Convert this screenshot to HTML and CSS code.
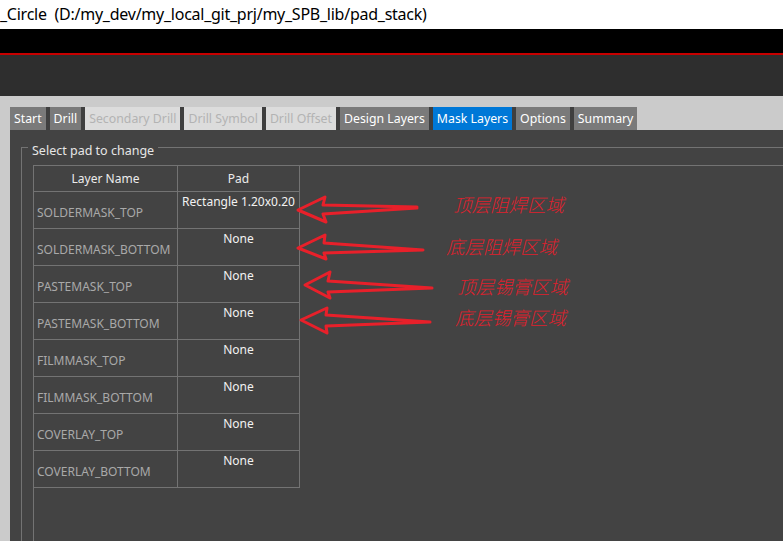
FILE: index.html
```html
<!DOCTYPE html>
<html>
<head>
<meta charset="utf-8">
<link rel="stylesheet" href="styles.css">
</head>
<body>
<div class="screen">
  <div class="titlebar">_Circle&nbsp; (D:/my_dev/my_local_git_prj/my_SPB_lib/pad_stack)</div>
  <div class="blackbar"></div>
  <div class="toolbar"></div>
  <div class="main">
    <div class="tabs">
      <div class="tab">Start</div>
      <div class="tab">Drill</div>
      <div class="tab disabled">Secondary Drill</div>
      <div class="tab disabled">Drill Symbol</div>
      <div class="tab disabled">Drill Offset</div>
      <div class="tab">Design Layers</div>
      <div class="tab active">Mask Layers</div>
      <div class="tab">Options</div>
      <div class="tab">Summary</div>
    </div>
    <div class="panel">
      <div class="group">
        <div class="group-title">Select pad to change</div>
        <div class="table-frame">
          <table class="grid">
            <thead>
              <tr><th class="c1">Layer Name</th><th class="c2">Pad</th></tr>
            </thead>
            <tbody>
              <tr><td class="name">SOLDERMASK_TOP</td><td class="pad">Rectangle 1.20x0.20</td></tr>
              <tr><td class="name">SOLDERMASK_BOTTOM</td><td class="pad">None</td></tr>
              <tr><td class="name">PASTEMASK_TOP</td><td class="pad">None</td></tr>
              <tr><td class="name">PASTEMASK_BOTTOM</td><td class="pad">None</td></tr>
              <tr><td class="name">FILMMASK_TOP</td><td class="pad">None</td></tr>
              <tr><td class="name">FILMMASK_BOTTOM</td><td class="pad">None</td></tr>
              <tr><td class="name">COVERLAY_TOP</td><td class="pad">None</td></tr>
              <tr><td class="name">COVERLAY_BOTTOM</td><td class="pad">None</td></tr>
            </tbody>
          </table>
        </div>
      </div>
    </div>
  </div>
  <svg class="annot" width="783" height="541" viewBox="0 0 783 541">
    <g class="arrow">
      <path d="M417,207 L323,205 L325,197 L298,210 L326,222 L323,214 L417,208"/>
      <path d="M423,250 L324,243 L325,235 L298,248 L326,259 L324,253 L423,250"/>
      <path d="M432,288 L328,281 L330,272 L305,285 L330,298 L328,292 L432,288"/>
      <path d="M430,322 L326,315 L327,308 L301,320 L327,333 L326,326 L430,322"/>
    </g>
    <g class="note">
      <text x="453" y="212">顶层阻焊区域</text>
      <text x="446" y="254">底层阻焊区域</text>
      <text x="457" y="294">顶层锡膏区域</text>
      <text x="455" y="325">底层锡膏区域</text>
    </g>
  </svg>
</div>
</body>
</html>
```
FILE: styles.css
```css
html, body {
  margin: 0;
  padding: 0;
  overflow: hidden;
  background: #434343;
}
.screen {
  position: relative;
  width: 783px;
  height: 541px;
  overflow: hidden;
  font-family: "Noto Sans", "Open Sans", sans-serif;
}
.titlebar {
  height: 29px;
  background: #ffffff;
  color: #000000;
  font-size: 16px;
  line-height: 29px;
  white-space: nowrap;
  letter-spacing: -0.25px;
}
.blackbar {
  height: 24px;
  background: #000000;
  border-bottom: 2px solid #c80000;
}
.toolbar {
  height: 41px;
  background: #2e2e2e;
}
.main {
  background: #cbcbcb;
  padding: 11px 0 0 10px;
  height: 445px;
  box-sizing: border-box;
  display: flex;
  flex-direction: column;
}
.tabs {
  display: flex;
  height: 23px;
}
.tab {
  background: #7a7a7a;
  color: #ffffff;
  font-size: 12.3px;
  line-height: 23px;
  padding: 0 4px;
  white-space: nowrap;
}
.tab + .tab {
  border-left: 4px solid #3f3f3f;
}
.tab.disabled {
  background: #dcdcdc;
  color: #b3b3b3;
}
.tab.active {
  background: #0078d7;
  color: #ffffff;
}
.panel {
  flex: 1;
  background: #434343;
  padding: 17px 0 0 11px;
}
.group {
  position: relative;
  border-top: 1px solid #737373;
  border-left: 1px solid #737373;
  padding: 17px 0 0 11px;
  height: 500px;
}
.group-title {
  position: absolute;
  top: -5px;
  left: 6px;
  padding: 0 4px;
  background: #434343;
  color: #e6e6e6;
  font-size: 12.5px;
  line-height: 16px;
}
.table-frame {
  border-top: 1px solid #737373;
  border-left: 1px solid #737373;
  height: 500px;
}
.grid {
  border-collapse: collapse;
  font-size: 12px;
}
.grid th, .grid td {
  border-right: 1px solid #737373;
  border-bottom: 1px solid #737373;
  padding: 0;
  white-space: nowrap;
}
.grid th {
  height: 25px;
  color: #ececec;
  font-weight: normal;
  text-align: center;
  line-height: 16px;
}
.grid .c1 { width: 143px; }
.grid .c2 { width: 121px; }
.grid td {
  height: 36px;
  vertical-align: top;
  line-height: 16px;
}
.grid td.name {
  color: #a9a9a9;
  padding: 13px 0 0 3px;
  height: 23px;
}
.grid td.pad {
  color: #f2f2f2;
  text-align: center;
  padding-top: 2px;
  height: 34px;
}
.annot {
  position: absolute;
  left: 0;
  top: 0;
  pointer-events: none;
}
.arrow path {
  fill: none;
  stroke: #e8202a;
  stroke-width: 3;
  stroke-linejoin: round;
  stroke-linecap: round;
}
.note text {
  fill: #e01f2d;
  font-family: "Noto Sans CJK SC", sans-serif;
  font-size: 18.5px;
  font-style: italic;
  font-weight: 300;
}
```
